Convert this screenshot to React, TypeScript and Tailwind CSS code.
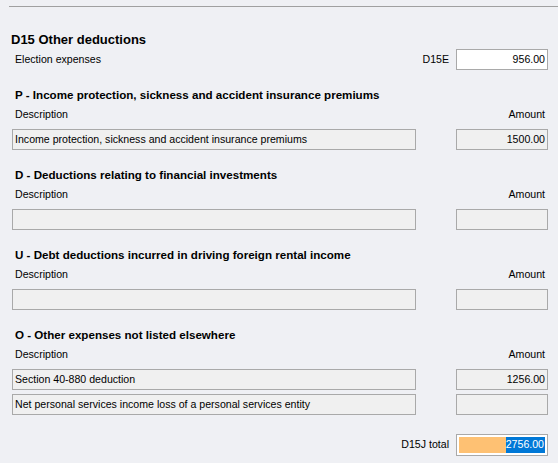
const font = { fontFamily: '"Liberation Sans", Arial, sans-serif' };

function Field({ value, white, className = "" }: { value?: string; white?: boolean; className?: string }) {
  return (
    <div
      className={`h-[21px] border border-[#a9a9a9] flex items-center px-[2px] text-[10.6px] text-black overflow-hidden whitespace-nowrap ${
        white ? "bg-white" : "bg-[#f0f0f0]"
      } ${className}`}
    >
      {value}
    </div>
  );
}

type Row = { desc: string; amount: string };

function Section({ title, rows }: { title: string; rows: Row[] }) {
  return (
    <div className="pb-[15px]">
      <div className="h-[20px] flex items-center pl-[15px] text-[11.6px] font-bold">{title}</div>
      <div className="h-[20px] flex items-center justify-between pl-[15px] pr-[13px] text-[10.6px]">
        <span>Description</span>
        <span>Amount</span>
      </div>
      <div className="flex flex-col gap-[4px] pt-[4px]">
        {rows.map((r, i) => (
          <div key={i} className="flex items-center pl-[12px]">
            <Field value={r.desc} className="w-[404px] justify-start" />
            <div className="w-[40px]" />
            <Field value={r.amount} className="w-[92px] justify-end" />
          </div>
        ))}
      </div>
    </div>
  );
}

export default function App() {
  return (
    <div className="w-[558px] h-[463px] bg-[#eff0f4] text-black overflow-hidden" style={font}>
      <div className="pt-[6px] pl-[9px]">
        <div className="border-t border-[#a0a0a0]" />
      </div>

      <div className="h-[19px] mt-[23px] flex items-center pl-[11px] text-[13px] font-bold">D15 Other deductions</div>

      <div className="flex items-center h-[21px] pl-[15px]">
        <span className="text-[10.6px] flex-1">Election expenses</span>
        <span className="text-[10.6px] mr-[7px]">D15E</span>
        <Field value="956.00" white className="w-[92px] justify-end mr-[10px]" />
      </div>

      <div className="mt-[15px]">
        <Section
          title="P - Income protection, sickness and accident insurance premiums"
          rows={[{ desc: "Income protection, sickness and accident insurance premiums", amount: "1500.00" }]}
        />
        <Section title="D - Deductions relating to financial investments" rows={[{ desc: "", amount: "" }]} />
        <Section title="U - Debt deductions incurred in driving foreign rental income" rows={[{ desc: "", amount: "" }]} />
        <Section
          title="O - Other expenses not listed elsewhere"
          rows={[
            { desc: "Section 40-880 deduction", amount: "1256.00" },
            { desc: "Net personal services income loss of a personal services entity", amount: "" },
          ]}
        />
      </div>

      <div className="flex items-center justify-end h-[22px] mt-[4px] pr-[10px]">
        <span className="text-[10.6px] mr-[7px]">D15J total</span>
        <div className="w-[92px] h-[22px] border border-[#a9a9a9] bg-white p-[2px]">
          <div className="h-full bg-[#fec173] flex justify-end items-center text-[10.6px]">
            <span className="bg-[#0078d7] text-white h-full flex items-center pr-[1px]">2756.00</span>
          </div>
        </div>
      </div>
    </div>
  );
}
